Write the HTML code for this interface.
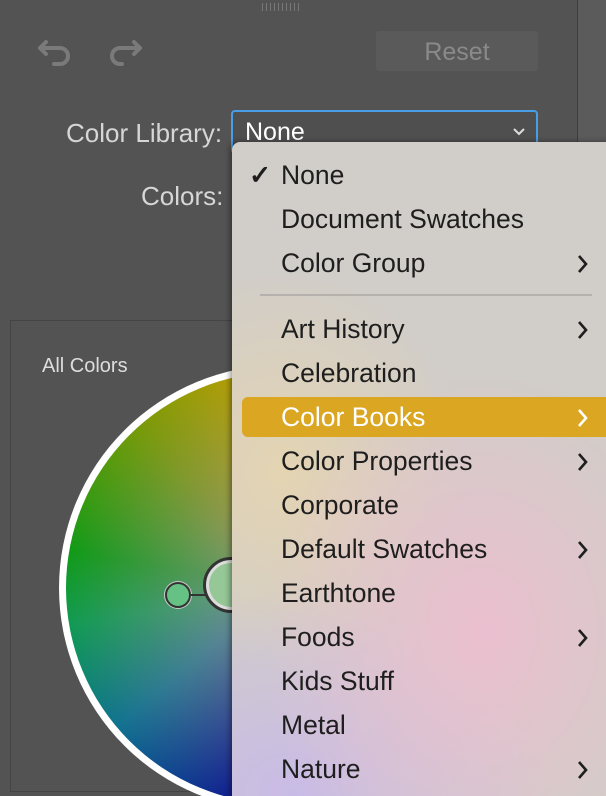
<!DOCTYPE html>
<html><head><style>
html{overflow:hidden;height:796px}
body{margin:0;width:606px;height:796px;overflow:hidden;background:#535353;font-family:"Liberation Sans",sans-serif;position:relative}
.abs{position:absolute}
.grip{left:262px;top:3px;width:40px;height:8px;background:repeating-linear-gradient(90deg,#777 0 1px,transparent 1px 4px)}
.right{left:577px;top:0;width:29px;height:796px;background:#5b5b5b;border-left:1px solid #3e3e3e}
.reset{left:376px;top:31px;width:162px;height:40px;background:#5a5a5a;border-radius:3px;color:#8a8a8a;font-size:25px;text-align:center;line-height:42px}
.lbl{color:#d6d6d6;font-size:26px}
.sel{left:231px;top:110px;width:303px;height:40px;border:2px solid #4a9ee8;border-radius:4px;background:#4f4f4f;color:#fff;font-size:25px}
.panel{left:10px;top:320px;width:600px;height:470px;border:1px solid #444;background:#535353}
.menu{left:232px;top:142px;width:380px;height:660px;border-radius:8px 0 0 0;overflow:hidden;
background:radial-gradient(ellipse 220px 260px at 250px 490px,#ebbfcf 0%,rgba(235,191,207,0) 100%),radial-gradient(ellipse 260px 200px at 60px 650px,#c9bbe6 0%,rgba(201,187,230,0) 100%),radial-gradient(ellipse 180px 200px at 50px 330px,#e4d4b2 0%,rgba(228,212,178,0) 100%),#d1cdc8;box-shadow:-2px 0 6px rgba(0,0,0,.4)}
.it{position:absolute;left:49px;font-size:26.5px;color:#1e1e1e;height:40px;line-height:40px;width:322px}
.it svg{position:absolute;left:295px;top:11px}
.hi{left:10px;padding-left:39px;background:#dba622;color:#fff;border-radius:6px 0 0 6px;width:340px}
.hi svg{left:334px}
</style></head><body>
<div class="abs right"></div>
<div class="abs grip"></div>
<svg class="abs" style="left:36px;top:38px" width="110" height="32" fill="none" stroke="#7a7a7a" stroke-width="4" stroke-linecap="round" stroke-linejoin="round">
<path d="M10 4 L4 10 L10 16 M4 10 H24 A8 8 0 0 1 24 26 H18"/>
<path d="M98 4 L104 10 L98 16 M104 10 H84 A8 8 0 0 0 84 26 H86"/>
</svg>
<div class="abs reset">Reset</div>
<div class="abs lbl" style="left:66px;top:118px">Color Library:</div>
<div class="abs lbl" style="left:141px;top:181px">Colors:</div>
<div class="abs sel"><span style="position:absolute;left:12px;top:6px">None</span><svg style="position:absolute;right:10px;top:15px" width="14" height="9"><path d="M2 2 L7 7 L12 2" stroke="#ddd" stroke-width="2" fill="none"/></svg></div>
<div class="abs panel"></div>
<div class="abs lbl" style="left:42px;top:355px;font-size:20px;color:#ddd">All Colors</div>
<div class="abs" style="left:59px;top:365px;width:446px;height:446px;border-radius:50%;background:#fff"></div>
<div class="abs" style="left:66px;top:372px;width:432px;height:432px;border-radius:50%;background:conic-gradient(from 0deg,#d0a000,#c04000 40deg,#c00060 90deg,#600090 150deg,#0a1090 190deg,#0a7090 230deg,#0a9a50 260deg,#0a9a10 280deg,#7a9a00 320deg,#d0a000)"></div>
<div class="abs" style="left:66px;top:372px;width:432px;height:432px;border-radius:50%;background:radial-gradient(circle,rgba(150,150,150,.85) 0%,rgba(150,150,150,0) 75%)"></div>
<div class="abs" style="left:165px;top:582px;width:26px;height:26px;border-radius:50%;background:#66c184;border:2px solid #333;box-sizing:border-box;box-shadow:0 0 0 1px #ccc"></div>
<div class="abs" style="left:190px;top:594px;width:20px;height:2px;background:#333"></div>
<div class="abs" style="left:203px;top:557px;width:50px;height:50px;border-radius:50%;background:#96c796;border:3px solid #333;box-shadow:inset 0 0 0 3px #ddd"></div>
<div class="abs menu">
<div class="it" style="top:13px"><span style="position:absolute;left:-32px;font-weight:bold">✓</span>None</div>
<div class="it" style="top:57px">Document Swatches</div>
<div class="it" style="top:101px">Color Group<svg width="12" height="20"><path d="M3 2 L10 10 L3 18" stroke="#1e1e1e" stroke-width="2.6" fill="none"/></svg></div>
<div class="abs" style="left:28px;top:152px;width:332px;height:2px;background:#b5b1ac"></div>
<div class="it" style="top:167px">Art History<svg width="12" height="20"><path d="M3 2 L10 10 L3 18" stroke="#1e1e1e" stroke-width="2.6" fill="none"/></svg></div>
<div class="it" style="top:211px">Celebration</div>
<div class="it hi" style="top:255px">Color Books<svg width="12" height="20"><path d="M3 2 L10 10 L3 18" stroke="#fff" stroke-width="2.6" fill="none"/></svg></div>
<div class="it" style="top:299px">Color Properties<svg width="12" height="20"><path d="M3 2 L10 10 L3 18" stroke="#1e1e1e" stroke-width="2.6" fill="none"/></svg></div>
<div class="it" style="top:343px">Corporate</div>
<div class="it" style="top:387px">Default Swatches<svg width="12" height="20"><path d="M3 2 L10 10 L3 18" stroke="#1e1e1e" stroke-width="2.6" fill="none"/></svg></div>
<div class="it" style="top:431px">Earthtone</div>
<div class="it" style="top:475px">Foods<svg width="12" height="20"><path d="M3 2 L10 10 L3 18" stroke="#1e1e1e" stroke-width="2.6" fill="none"/></svg></div>
<div class="it" style="top:519px">Kids Stuff</div>
<div class="it" style="top:563px">Metal</div>
<div class="it" style="top:607px">Nature<svg width="12" height="20"><path d="M3 2 L10 10 L3 18" stroke="#1e1e1e" stroke-width="2.6" fill="none"/></svg></div>
</div>
</body></html>
